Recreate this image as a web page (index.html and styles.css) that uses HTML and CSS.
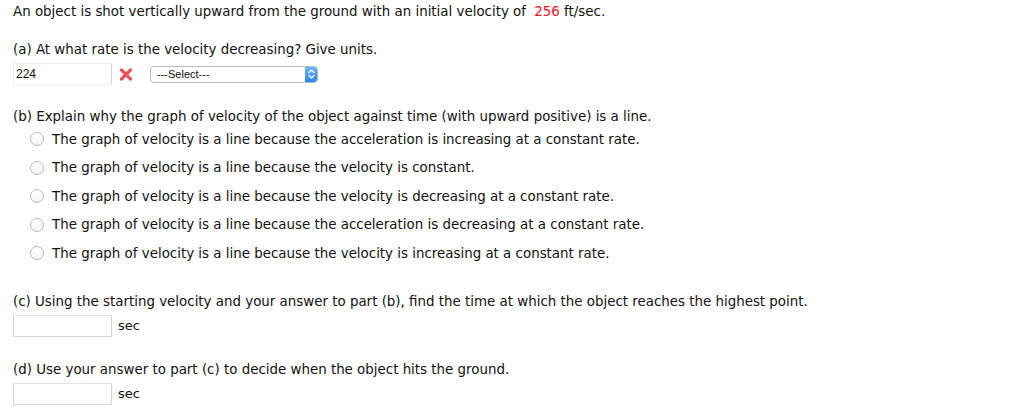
FILE: index.html
```html
<!DOCTYPE html>
<html>
<head>
<meta charset="utf-8">
<link rel="stylesheet" href="styles.css">
</head>
<body>
<p class="intro">An object is shot vertically upward from the ground with an initial velocity of <span class="num">256</span> ft/sec.</p>

<p class="label gap-a">(a) At what rate is the velocity decreasing? Give units.</p>
<div class="row">
  <div class="box answered">224</div>
  <svg class="xmark" width="14" height="13" viewBox="0 0 14 13"><path d="M2.5 2 L11.5 11 M11.5 2 L2.5 11" stroke="#e8545c" stroke-width="3.2" stroke-linecap="round"/></svg>
  <div class="select"><span class="sel-text">---Select---</span><span class="sel-arrow"><svg width="11" height="16" viewBox="0 0 11 16"><path d="M3 6.5 L5.5 4 L8 6.5 M3 9.5 L5.5 12 L8 9.5" fill="none" stroke="#fff" stroke-width="1.3" stroke-linecap="round" stroke-linejoin="round"/></svg></span></div>
</div>

<p class="label gap-b">(b) Explain why the graph of velocity of the object against time (with upward positive) is a line.</p>
<ul class="options">
  <li class="option"><span class="radio"></span>The graph of velocity is a line because the acceleration is increasing at a constant rate.</li>
  <li class="option"><span class="radio"></span>The graph of velocity is a line because the velocity is constant.</li>
  <li class="option"><span class="radio"></span>The graph of velocity is a line because the velocity is decreasing at a constant rate.</li>
  <li class="option"><span class="radio"></span>The graph of velocity is a line because the acceleration is decreasing at a constant rate.</li>
  <li class="option"><span class="radio"></span>The graph of velocity is a line because the velocity is increasing at a constant rate.</li>
</ul>

<p class="label gap-c">(c) Using the starting velocity and your answer to part (b), find the time at which the object reaches the highest point.</p>
<div class="row">
  <div class="box"></div>
  <span class="unit">sec</span>
</div>

<p class="label gap-d">(d) Use your answer to part (c) to decide when the object hits the ground.</p>
<div class="row">
  <div class="box"></div>
  <span class="unit">sec</span>
</div>
</body>
</html>
```

FILE: styles.css
```css
html, body {
  margin: 0;
  padding: 0;
  background: #fff;
}
body {
  padding: 0 13px;
  font-family: "DejaVu Sans", Verdana, sans-serif;
  font-size: 13.4px;
  color: #111;
}
p {
  margin: 0;
  line-height: 16px;
  white-space: nowrap;
}
.intro {
  margin-top: 4px;
}
.num {
  color: #f0141e;
  margin-left: 4px;
}
.gap-a { margin-top: 22px; }
.gap-b { margin-top: 24px; }
.gap-c { margin-top: 26px; }
.gap-d { margin-top: 25px; }

.row {
  display: flex;
  align-items: center;
  margin-top: 5px;
  height: 22px;
}
.box {
  box-sizing: border-box;
  width: 99px;
  height: 22px;
  border: 1px solid #d6d6d6;
  border-top-color: #e4e4e4;
  background: #fff;
  flex: none;
}
.box.answered {
  border-color: #ececec;
  border-right-color: #d4d4d4;
  font-family: "Liberation Sans", Arial, sans-serif;
  font-size: 12px;
  line-height: 20px;
  padding-left: 2px;
  color: #111;
}
.xmark {
  margin-left: 7px;
  flex: none;
}
.select {
  display: flex;
  align-items: stretch;
  margin-left: 17px;
  box-sizing: border-box;
  width: 168px;
  height: 17px;
  border: 1px solid #b9b9b9;
  border-radius: 4px;
  background: #fff;
  overflow: hidden;
  font-family: "Liberation Sans", Arial, sans-serif;
  font-size: 11px;
  color: #111;
}
.sel-text {
  flex: 1;
  padding-left: 6px;
  line-height: 15px;
}
.sel-arrow {
  width: 12px;
  display: flex;
  align-items: center;
  justify-content: center;
  background: linear-gradient(#6cb3fa, #2a84f3);
}
.unit {
  margin-left: 6px;
  font-size: 13px;
}

.options {
  list-style: none;
  margin: 0;
  padding: 0;
}
.option {
  display: flex;
  align-items: center;
  height: 28.5px;
  white-space: nowrap;
}
.radio {
  box-sizing: border-box;
  width: 14px;
  height: 14px;
  border-radius: 50%;
  border: 1px solid #b8b8b8;
  background: linear-gradient(#fff, #f4f4f4);
  margin-left: 17px;
  margin-right: 8px;
  flex: none;
}
```
